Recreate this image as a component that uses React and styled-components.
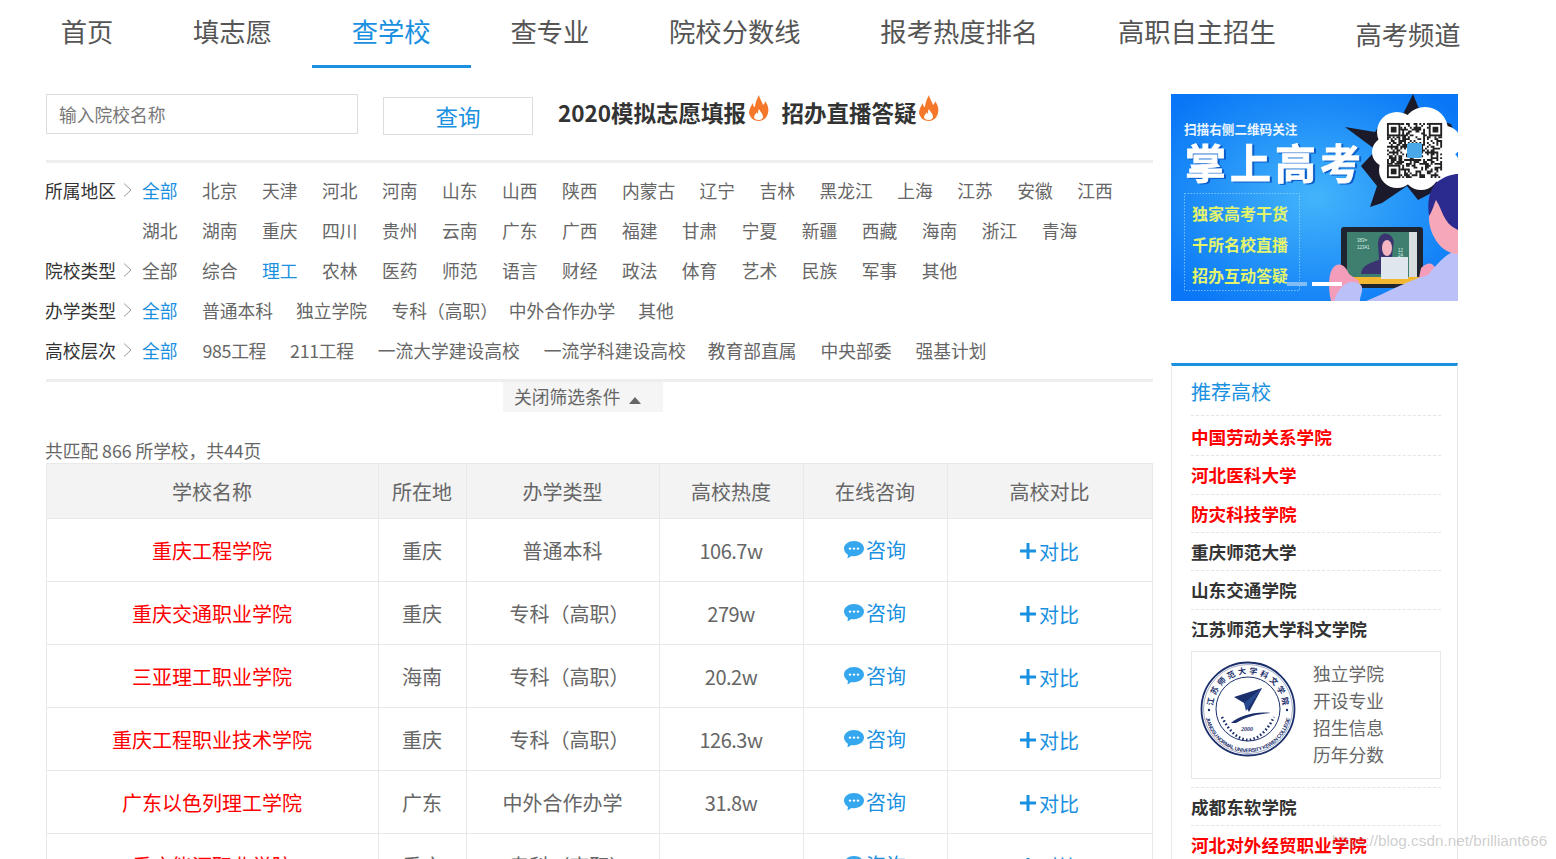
import React from "react";
import styled, { createGlobalStyle } from "styled-components";

const Global = createGlobalStyle`
  html, body { margin: 0; padding: 0; background: #fff; overflow: hidden; height: 859px; }
  body { font-family: "Noto Sans CJK SC", "Noto Sans", sans-serif; color: #666; }
  * { box-sizing: border-box; }
`;

const Page = styled.div`
  position: relative;
  width: 1556px;
  height: 859px;
  overflow: hidden;
`;
const Nav = styled.nav`
  display: flex;
  height: 68px;
  padding-left: 20.8px;
`;
const NavItem = styled.a`
  display: block;
  height: 68px;
  padding: ${p => (p.$low ? "3px" : "0")} 39.9px 0;
  border-bottom: 3px solid ${p => (p.$active ? "#1a90e0" : "transparent")};
  color: ${p => (p.$active ? "#1a90e0" : "#555")};
  font-size: 26.3px;
  line-height: 62px;
`;
const Body = styled.div`
  display: flex;
  gap: 18px;
  padding: 26px 0 0 46px;
`;
const Main = styled.main`
  width: 1107px;
  flex: none;
`;
const SearchBar = styled.div`
  display: flex;
  height: 66px;
  align-items: flex-start;
`;
const SearchInput = styled.div`
  width: 312px;
  height: 40px;
  border: 1px solid #ddd;
  padding-left: 12px;
  font-size: 17.75px;
  line-height: 38px;
  color: #777;
`;
const SearchButton = styled.button`
  width: 150px;
  height: 38px;
  margin: 3px 25px 0;
  border: 1px solid #ddd;
  background: #fff;
  color: #1a90e0;
  font: 22.5px/36px "Noto Sans CJK SC", sans-serif;
  padding: 0;
`;
const HotLink = styled.a`
  display: flex;
  align-items: flex-start;
  margin-right: 13px;
  color: #333;
  font-size: 22.5px;
  font-weight: 700;
  line-height: 36px;
`;
const Flame = styled.svg`
  width: 20px;
  height: 27px;
  margin: 1px 0 0 2.5px;
  flex: none;
`;
const FilterPanel = styled.section`
  border-top: 3px solid #eee;
  border-bottom: 3px solid #eee;
  padding: 8px 0;
`;
const FilterRow = styled.div`
  display: flex;
`;
const FilterLabel = styled.div`
  position: relative;
  width: 96px;
  margin-left: -1px;
  margin-right: 1px;
  flex: none;
  font-size: 17.75px;
  line-height: 38px;
  color: #333;
`;
const Chevron = styled.svg`
  position: absolute;
  left: 78px;
  top: 12px;
  width: 9px;
  height: 14px;
`;
const Options = styled.div`
  display: flex;
  flex-wrap: wrap;
  column-gap: ${p => p.$gap}px;
  flex: 1;
`;
const Option = styled.a`
  font-size: 17.75px;
  line-height: 38px;
  padding-bottom: 2px;
  margin-left: ${p => p.$nudge || 0}px;
  letter-spacing: ${p => (p.$tight ? "-0.3px" : "0")};
  color: ${p => (p.$active ? "#1a90e0" : "#666")};
`;
const Toggle = styled.div`
  display: flex;
  align-items: center;
  width: 160px;
  height: 30px;
  margin-left: 457px;
  padding: 0 0 2px 11px;
  background: #f5f5f5;
  font-size: 17.75px;
  color: #666;
`;
const Caret = styled.i`
  width: 0;
  height: 0;
  margin: 8px 0 0 8.5px;
  border-left: 6.5px solid transparent;
  border-right: 6.5px solid transparent;
  border-bottom: 7px solid #666;
`;
const Summary = styled.p`
  margin: 24px 0 0 -1px;
  height: 27px;
  font-size: 17.75px;
  line-height: 28px;
  letter-spacing: -0.04px;
  color: #666;
`;
const Table = styled.table`
  width: 1106px;
  table-layout: fixed;
  border-collapse: collapse;
`;
const Th = styled.th`
  height: 55px;
  padding: 0 1px 0 0;
  background: #f3f3f3;
  border: 1px solid #e8e8e8;
  font-size: 20px;
  font-weight: 400;
  color: #666;
`;
const Td = styled.td`
  height: 63px;
  padding: 0 1px 0 0;
  border: 1px solid #e8e8e8;
  font-size: 20px;
  text-align: center;
  letter-spacing: ${p => (p.$num ? "-0.5px" : "0")};
  color: ${p => (p.$red ? "#f00" : "#666")};
`;
const ActionLink = styled.a`
  display: inline-flex;
  align-items: center;
  color: #1a90e0;
  position: relative;
  top: ${p => p.$top || 0}px;
`;
const ChatIcon = styled.svg`
  width: 20px;
  height: 19px;
  margin-right: 2px;
`;
const PlusIcon = styled.svg`
  width: 16px;
  height: 16px;
  margin-right: 3px;
`;
const Side = styled.aside`
  width: 287px;
  flex: none;
`;
const Banner = styled.svg`
  display: block;
  width: 287px;
  height: 207px;
`;
const BannerTitle = styled.text`
  font-family: "Noto Sans CJK SC", sans-serif;
  font-size: 41px;
  font-weight: 700;
  letter-spacing: 4px;
  fill: #fff;
  stroke: #fff;
  stroke-width: 0.8px;
  filter: drop-shadow(2px 1px 0 #0a5cc8);
`;
const RecBox = styled.section`
  margin-top: 62px;
  height: 600px;
  border-top: 3px solid #1a90e0;
  border-left: 1px solid #e8e8e8;
  border-right: 1px solid #e8e8e8;
  padding: 0 16px 0 19px;
`;
const RecTitle = styled.h3`
  margin: 0 0 2px;
  height: 50px;
  border-bottom: 1px dashed #e4e4e4;
  font-size: 20px;
  font-weight: 400;
  line-height: 52px;
  color: #1a90e0;
`;
const RecItem = styled.div`
  height: 38.33px;
  border-bottom: ${p => (p.$plain ? "none" : "1px dashed #e4e4e4")};
  font-size: 17.6px;
  font-weight: 700;
  line-height: 37px;
  color: ${p => (p.$red ? "#f00" : "#333")};
`;
const SchoolCard = styled.div`
  display: flex;
  height: 128px;
  margin: 3px 0 8px;
  border: 1px solid #e8e8e8;
  padding: 9px 0 0 8px;
`;
const Seal = styled.svg`
  width: 96px;
  height: 96px;
  flex: none;
`;
const CardLinks = styled.div`
  margin-left: 17px;
  margin-top: -1px;
  font-size: 17.75px;
  line-height: 27px;
  color: #666;
`;
const Divider = styled.div`
  border-top: 1px dashed #e4e4e4;
`;
const Watermark = styled.div`
  position: absolute;
  left: 1332px;
  top: 830px;
  font-family: "Liberation Sans", sans-serif;
  font-size: 15.3px;
  line-height: 22px;
  color: rgba(130, 130, 130, 0.4);
  white-space: nowrap;
`;
const CloseParen = styled.span`
  display: inline-block;
  width: 0.3em;
`;

const Zk = () => <>专科（高职<CloseParen>）</CloseParen></>;

const FlameIcon = () => (
  <Flame viewBox="0 0 20 27">
    <path d="M10 0C11 5 13 6 14 10C15 9 16 8 16 6C19 10 20 14 19 18C18 23 14 26 10 26C5 26 1 23 0 18C0 14 2 11 4 8C4 11 5 12 6 12C6 8 8 4 10 0z" fill="#f4772a" />
    <path d="M10 14C11 17 14 18 14 22C14 24 12 25 10 25C7 25 5 24 5 22C5 20 7 19 8 17C8 18 9 19 9 19C9 17 9 15 10 14z" fill="#fff" />
  </Flame>
);

const nudges = { "普通本科": 1.5, "专科（高职）": 1.5, "985工程": 1, "教育部直属": -2 };
const filters = [
  ["所属地区", ["全部","北京","天津","河北","河南","山东","山西","陕西","内蒙古","辽宁","吉林","黑龙江","上海","江苏","安徽","江西","湖北","湖南","重庆","四川","贵州","云南","广东","广西","福建","甘肃","宁夏","新疆","西藏","海南","浙江","青海"], "全部", 24.47],
  ["院校类型", ["全部","综合","理工","农林","医药","师范","语言","财经","政法","体育","艺术","民族","军事","其他"], "理工", 24.47],
  ["办学类型", ["全部","普通本科","独立学院","专科（高职）","中外合作办学","其他"], "全部", 23],
  ["高校层次", ["全部","985工程","211工程","一流大学建设高校","一流学科建设高校","教育部直属","中央部委","强基计划"], "全部", 24],
];
const rows = [
  ["重庆工程学院","重庆","普通本科","106.7w"],
  ["重庆交通职业学院","重庆","专科","279w"],
  ["三亚理工职业学院","海南","专科","20.2w"],
  ["重庆工程职业技术学院","重庆","专科","126.3w"],
  ["广东以色列理工学院","广东","中外合作办学","31.8w"],
  ["重庆能源职业学院","重庆","专科","35.2w"],
];

function qrPath() {
  let d = "", s = 12345;
  const n = 29, c = 1.9;
  const finder = (x, y) => x < 7 && y < 7 || x >= n - 7 && y < 7 || x < 7 && y >= n - 7;
  for (let y = 0; y < n; y++) for (let x = 0; x < n; x++) {
    s = (s * 1103515245 + 12345) & 0x7fffffff;
    if (!finder(x, y) && ((s >> 16) & 1)) d += `M${x * c} ${y * c}h${c}v${c}h${-c}z`;
  }
  return d;
}
const Finder = ({ x, y }) => (
  <g transform={`translate(${x} ${y})`}>
    <rect x=".9" y=".9" width="11.5" height="11.5" fill="none" stroke="#222" strokeWidth="1.9" />
    <rect x="3.8" y="3.8" width="5.7" height="5.7" fill="#222" />
  </g>
);
const bannerFont = { fontFamily: '"Noto Sans CJK SC", sans-serif' };
const BannerArt = () => (
  <Banner viewBox="0 0 287 207">
    <defs>
      <radialGradient id="bg" cx="50%" cy="50%" r="65%">
        <stop offset="0" stopColor="#43b4fb" />
        <stop offset="1" stopColor="#0876f6" />
      </radialGradient>
    </defs>
    <rect width="287" height="207" fill="url(#bg)" />
    <text x="13" y="40" fill="#eaf5ff" fontSize="12.6" fontWeight="700" style={bannerFont}>扫描右侧二维码关注</text>
    <BannerTitle x="14" y="85">掌上高考</BannerTitle>
    <rect x="13.5" y="99.5" width="115" height="97" fill="none" stroke="#9fd8ff" strokeWidth=".7" strokeDasharray="1.5 1.5" />
    <g fill="#e3f46c" fontSize="16" fontWeight="700" style={bannerFont}>
      <text x="21" y="126">独家高考干货</text>
      <text x="21" y="157">千所名校直播</text>
      <text x="21" y="188">招办互动答疑</text>
    </g>
    <polygon fill="#1a1a2a" points="174,33 204,38 214,22 232,20 242,0 250,20 280,30 287,48 280,60 287,85 268,95 247,106 236,92 211,109 199,113 206,92 190,72 205,56" />
    <g fill="#fff">
      <circle cx="226" cy="38" r="20" />
      <circle cx="254" cy="36" r="23" />
      <circle cx="274" cy="48" r="16" />
      <circle cx="216" cy="58" r="15" />
      <circle cx="226" cy="76" r="18" />
      <circle cx="250" cy="78" r="18" />
      <circle cx="272" cy="72" r="17" />
      <rect x="218" y="35" width="60" height="45" />
    </g>
    <g transform="translate(216 29)">
      <path d={qrPath()} fill="#222" />
      <Finder x="0" y="0" /><Finder x="41.8" y="0" /><Finder x="0" y="41.8" />
      <rect x="20" y="20" width="15" height="15" rx="2" fill="#4aa8e8" />
    </g>
    <rect x="170" y="133" width="82" height="61" rx="3" fill="#1e2430" />
    <rect x="176" y="138" width="70" height="48" fill="#3f7f6f" />
    <rect x="238" y="138" width="8" height="48" fill="#d8dde0" />
    <rect x="176" y="183" width="72" height="7" fill="#f2b630" />
    <g fill="#d9efe6" fontSize="4.5" style={{ fontFamily: '"Liberation Sans", sans-serif' }}>
      <text x="186" y="148">383=</text>
      <text x="186" y="155">12341</text>
      <text x="227" y="158">12</text>
      <text x="227" y="163">24</text>
    </g>
    <path d="M190 180c0-8 10-12 18-14l-1-16c0-8 5-12 10-10 5 2 7 8 5 13l-1 10 8 4v13z" fill="#3a3570" />
    <ellipse cx="216" cy="154" rx="5" ry="8" fill="#f4b6c2" />
    <rect x="210" y="163" width="27" height="22" fill="#dfe6ee" />
    <path d="M160 207c-3-14-3-30 4-35 6-4 11 1 14 8l10 7 0 20z" fill="#f39dba" />
    <path d="M250 174c6-6 12-6 14 0l-4 20-14 0z" fill="#f39dba" />
    <path d="M163 207c4-14 14-22 24-18 8 3 2 12 2 18z" fill="#bcc0f8" />
    <path d="M195 207c20-8 45-22 62-26 10-12 20-24 30-24v50z" fill="#bcc0f8" />
    <path d="M258 122c-2-14 0-26 8-34 8-6 16-8 21-8v58c-14 6-25 0-29-16z" fill="#2b2a8e" />
    <path d="M258 122c4-6 5-12 7-16 4 6 6 14 10 20 3 5 8 8 12 10v24c-18 0-30-22-29-38z" fill="#f6a8b8" />
    <rect x="116" y="188" width="20" height="4" fill="#7fbdf4" />
    <rect x="141" y="188" width="30" height="4" fill="#fff" />
  </Banner>
);

const navy = "#1b2f6c";
const SealArt = () => (
  <Seal viewBox="0 0 96 96">
    <defs>
      <path id="topArc" d="M13.100 45A35 35 0 0 1 82.900 45" />
      <path id="botArc" d="M5.900 57A43 43 0 0 0 90.100 57" />
    </defs>
    <circle cx="48" cy="48" r="46.5" fill="#fff" stroke={navy} strokeWidth="1.8" />
    <circle cx="48" cy="48" r="44.500" fill="none" stroke={navy} strokeWidth=".4" />
    <circle cx="48" cy="48" r="32" fill="none" stroke={navy} strokeWidth="1" />
    <text fontSize="8" fill={navy} fontWeight="700" style={{ fontFamily: '"Noto Sans CJK SC", sans-serif' }}>
      <textPath href="#topArc" textLength="104">江苏师范大学科文学院</textPath>
    </text>
    <text fontSize="5.3" fill={navy} fontWeight="700" style={{ fontFamily: '"Liberation Sans", sans-serif' }}>
      <textPath href="#botArc" textLength="117">JIANGSU NORMAL UNIVERSITY KEWEN COLLEGE</textPath>
    </text>
    <circle cx="9" cy="49" r="1.2" fill={navy} />
    <circle cx="87" cy="49" r="1.2" fill={navy} />
    <polygon points="34,36 62,27 49,51 44,42" fill={navy} />
    <polygon points="44,42 62,27 46,50" fill="#2a4a90" />
    <path d="M31 62c8-7 24-12 40-10-15 1-25 4-35 10z" fill={navy} />
    <path d="M22 56c6 12 14 22 26 23 12-1 20-11 26-23" fill="none" stroke={navy} strokeWidth="2.6" strokeDasharray="1.6 2.2" />
    <text x="47" y="70" fontSize="6" textAnchor="middle" fontStyle="italic" fontWeight="700" fill={navy} style={{ fontFamily: '"Liberation Serif", serif' }}>2000</text>
  </Seal>
);

export default function App() {
  return (
    <Page>
      <Global />
      <Nav>
        <NavItem>首页</NavItem>
        <NavItem>填志愿</NavItem>
        <NavItem $active>查学校</NavItem>
        <NavItem>查专业</NavItem>
        <NavItem>院校分数线</NavItem>
        <NavItem>报考热度排名</NavItem>
        <NavItem>高职自主招生</NavItem>
        <NavItem $low>高考频道</NavItem>
      </Nav>
      <Body>
        <Main>
          <SearchBar>
            <SearchInput>输入院校名称</SearchInput>
            <SearchButton>查询</SearchButton>
            <HotLink>2020模拟志愿填报<FlameIcon /></HotLink>
            <HotLink>招办直播答疑<FlameIcon /></HotLink>
          </SearchBar>
          <FilterPanel>
            {filters.map(([label, opts, active, gap]) => (
              <FilterRow key={label}>
                <FilterLabel>
                  {label}
                  <Chevron viewBox="0 0 9 14"><path d="M1 .5l7 6.500-7 6.500" fill="none" stroke="#999" strokeWidth="1" /></Chevron>
                </FilterLabel>
                <Options $gap={gap}>
                  {opts.map(o => (
                    <Option key={o} $active={o === active} $tight={/\d/.test(o)} $nudge={nudges[o]}>
                      {o === "专科（高职）" ? <Zk /> : o}
                    </Option>
                  ))}
                </Options>
              </FilterRow>
            ))}
          </FilterPanel>
          <Toggle>关闭筛选条件<Caret /></Toggle>
          <Summary>共匹配 866 所学校，共44页</Summary>
          <Table>
            <colgroup>
              <col width="332" /><col width="88" /><col width="193" /><col width="144" /><col width="144" /><col width="205" />
            </colgroup>
            <thead>
              <tr>
                <Th>学校名称</Th><Th>所在地</Th><Th>办学类型</Th><Th>高校热度</Th><Th>在线咨询</Th><Th>高校对比</Th>
              </tr>
            </thead>
            <tbody>
              {rows.map(r => (
                <tr key={r[0]}>
                  <Td $red>{r[0]}</Td>
                  <Td>{r[1]}</Td>
                  <Td>{r[2] === "专科" ? <Zk /> : r[2]}</Td>
                  <Td $num>{r[3]}</Td>
                  <Td>
                    <ActionLink>
                      <ChatIcon viewBox="0 0 20 19">
                        <path d="M10 1c5.500 0 10 3.300 10 7.600s-4.500 7.600-10 7.600c-.9 0-1.700-.1-2.500-.3L3.500 18.500l.4-3.700C1.500 13.400 0 11.100 0 8.600 0 4.300 4.500 1 10 1z" fill="#35a7ee" />
                        <circle cx="6" cy="8.600" r="1.200" fill="#fff" /><circle cx="10" cy="8.600" r="1.200" fill="#fff" /><circle cx="14" cy="8.600" r="1.200" fill="#fff" />
                      </ChatIcon>
                      咨询
                    </ActionLink>
                  </Td>
                  <Td>
                    <ActionLink $top={1}>
                      <PlusIcon viewBox="0 0 16 16"><path d="M6.500 0h3v6.500H16v3H9.500V16h-3V9.500H0v-3h6.500z" fill="#1a90e0" /></PlusIcon>
                      对比
                    </ActionLink>
                  </Td>
                </tr>
              ))}
            </tbody>
          </Table>
        </Main>
        <Side>
          <BannerArt />
          <RecBox>
            <RecTitle>推荐高校</RecTitle>
            <RecItem $red>中国劳动关系学院</RecItem>
            <RecItem $red>河北医科大学</RecItem>
            <RecItem $red>防灾科技学院</RecItem>
            <RecItem>重庆师范大学</RecItem>
            <RecItem>山东交通学院</RecItem>
            <RecItem $plain>江苏师范大学科文学院</RecItem>
            <SchoolCard>
              <SealArt />
              <CardLinks>独立学院<br />开设专业<br />招生信息<br />历年分数</CardLinks>
            </SchoolCard>
            <Divider />
            <RecItem>成都东软学院</RecItem>
            <RecItem $red>河北对外经贸职业学院</RecItem>
          </RecBox>
        </Side>
      </Body>
      <Watermark>https://blog.csdn.net/brilliant666</Watermark>
    </Page>
  );
}
